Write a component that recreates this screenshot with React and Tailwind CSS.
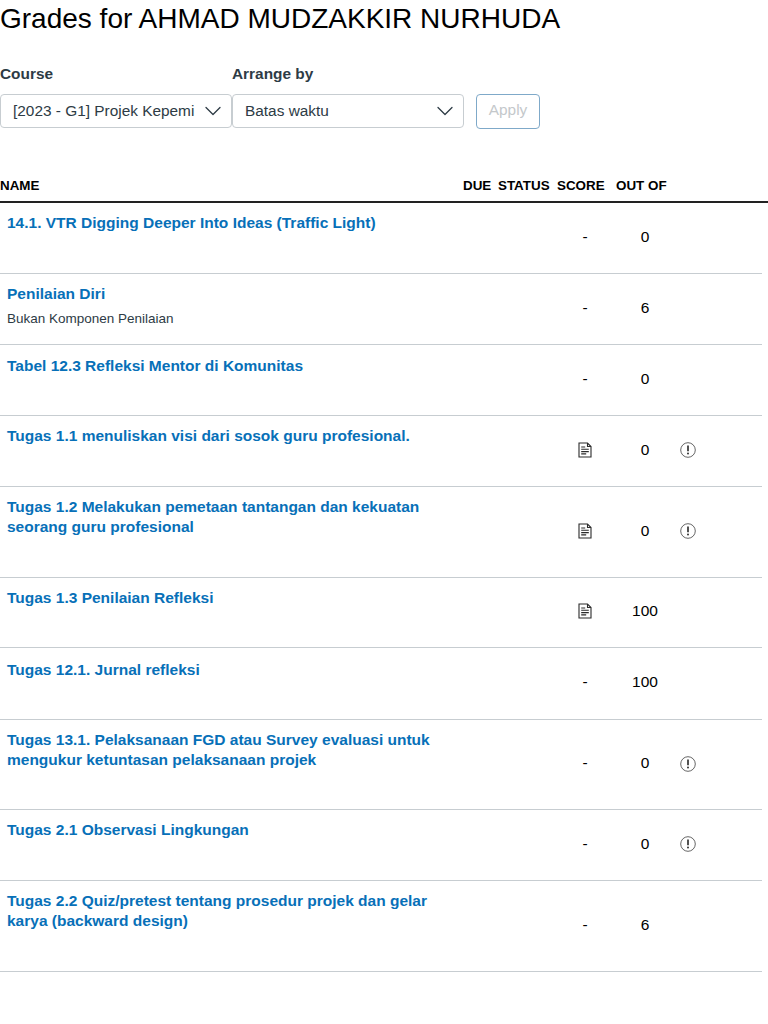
import { ChevronDown } from 'lucide-react';

const rows = [
  { name: '14.1. VTR Digging Deeper Into Ideas (Traffic Light)', score: '-', outOf: '0', height: 'h-[71px]', top: 'pt-[10px]' },
  { name: 'Penilaian Diri', note: 'Bukan Komponen Penilaian', score: '-', outOf: '6', height: 'h-[71px]', top: 'pt-[10px]' },
  { name: 'Tabel 12.3 Refleksi Mentor di Komunitas', score: '-', outOf: '0', height: 'h-[71px]', top: 'pt-[11px]' },
  { name: 'Tugas 1.1 menuliskan visi dari sosok guru profesional.', doc: true, outOf: '0', alert: true, height: 'h-[71px]', top: 'pt-[10px]' },
  { name: 'Tugas 1.2 Melakukan pemetaan tantangan dan kekuatan seorang guru profesional', doc: true, outOf: '0', alert: true, height: 'h-[91px]', top: 'pt-[10px]' },
  { name: 'Tugas 1.3 Penilaian Refleksi', doc: true, outOf: '100', height: 'h-[70px]', top: 'pt-[10px]' },
  { name: 'Tugas 12.1. Jurnal refleksi', score: '-', outOf: '100', height: 'h-[72px]', top: 'pt-[12px]' },
  { name: 'Tugas 13.1. Pelaksanaan FGD atau Survey evaluasi untuk mengukur ketuntasan pelaksanaan projek', score: '-', outOf: '0', alert: true, height: 'h-[90px]', top: 'pt-[10px]' },
  { name: 'Tugas 2.1 Observasi Lingkungan', score: '-', outOf: '0', alert: true, height: 'h-[71px]', top: 'pt-[10px]' },
  { name: 'Tugas 2.2 Quiz/pretest tentang prosedur projek dan gelar karya (backward design)', score: '-', outOf: '6', height: 'h-[91px]', top: 'pt-[10px]' },
];

const DocIcon = () => (
  <svg width="14" height="16" viewBox="0 0 14 16" fill="none" stroke="#2b2b2b" strokeWidth="1.1">
    <path d="M1 1h8.5L13 4.5V15H1z" />
    <path d="M9.5 1v3.5H13" />
    <path d="M3.2 5h4M3.2 7.3h7.6M3.2 9.6h7.6M3.2 11.9h5" />
  </svg>
);

const AlertIcon = () => (
  <svg width="16" height="16" viewBox="0 0 16 16" fill="none">
    <circle cx="8" cy="8" r="7.3" stroke="#666" strokeWidth="1" />
    <path d="M8 3.6v5.6" stroke="#333" strokeWidth="1.7" />
    <circle cx="8" cy="11.6" r="1" fill="#333" />
  </svg>
);

const Select = ({ label, value }) => (
  <div className="w-[232px]">
    <div className="text-[15.4px] font-bold leading-5 text-[#2d3b45]">{label}</div>
    <div className="mt-[10px] flex h-[34px] items-center justify-between rounded border border-[#c7cdd1] bg-white pl-3 pr-[4px] text-[15.4px] text-[#2d3b45]">
      <span className="whitespace-nowrap">{value}</span>
      <ChevronDown size={28} strokeWidth={1.1} />
    </div>
  </div>
);

export default function App() {
  return (
    <div className="min-h-[1024px] bg-white font-['Liberation_Sans',Arial,sans-serif] text-black">
      <h1 className="pt-[4px] text-[28px] leading-[30px]">Grades for AHMAD MUDZAKKIR NURHUDA</h1>

      <div className="mt-[30px] flex items-start">
        <Select label="Course" value="[2023 - G1] Projek Kepemi" />
        <Select label="Arrange by" value="Batas waktu" />
        <button className="ml-3 mt-[30px] h-[35px] w-[64px] rounded border border-[#7fa9c9] bg-white pb-[3px] text-[15.4px] text-[#c4c8cb]">
          Apply
        </button>
      </div>

      <div className="mt-[48px] flex h-[18px] items-center text-[13.4px] font-bold leading-[18px]">
        <div className="w-[463px]">NAME</div>
        <div className="w-[35px]">DUE</div>
        <div className="w-[59px]">STATUS</div>
        <div className="w-[59px]">SCORE</div>
        <div>OUT OF</div>
      </div>
      <div className="mt-[6px] h-[2px] bg-[#222]" />

      <div className="w-[762px]">
        {rows.map((row) => (
          <div key={row.name} className={`flex border-b border-[#c7cdd1] ${row.height}`}>
            <div className={`w-[557px] pl-[7px] ${row.top}`}>
              <div className="w-[435px] text-[15.5px] font-bold leading-[19.5px] text-[#0770b8]">{row.name}</div>
              {row.note && <div className="mt-[6px] text-[13.5px] leading-[18px] text-[#2d3b45]">{row.note}</div>}
            </div>
            <div className="flex w-[56px] items-center justify-center pb-[3px] text-[15.5px]">
              {row.doc ? <DocIcon /> : row.score}
            </div>
            <div className="flex w-[64px] items-center justify-center pb-[3px] text-[15.5px]">{row.outOf}</div>
            <div className="flex w-[22px] items-center justify-center pb-[2px]">{row.alert && <AlertIcon />}</div>
          </div>
        ))}
      </div>
    </div>
  );
}
